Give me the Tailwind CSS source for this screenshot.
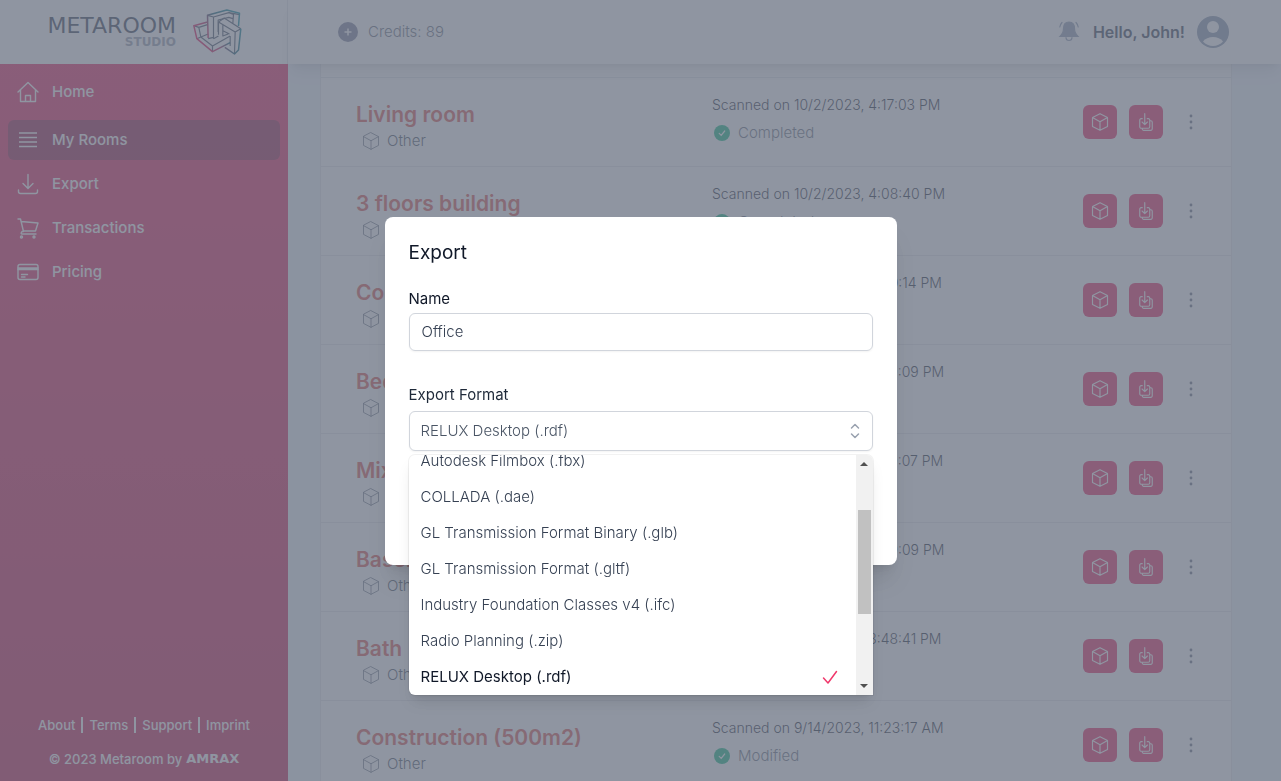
<!DOCTYPE html>
<html lang="en">

<head>
  <meta charset="UTF-8">
  <meta name="viewport" content="width=device-width, initial-scale=1.0">
  <title>Metaroom Studio - My Rooms</title>
  <script src="https://cdn.jsdelivr.net/npm/@tailwindcss/browser@4"></script>
</head>

<body class="h-screen overflow-hidden bg-[#f0f5fc] font-['Inter','Liberation_Sans',sans-serif] text-[15px] leading-5">

  <!-- Shared icons -->
  <svg class="hidden">
    <symbol id="cube" viewBox="0 0 24 24" fill="none" stroke="currentColor" stroke-linejoin="round" stroke-linecap="round">
      <path d="M12 2 21 6.700v10.600L12 22 3 17.300V6.700zM3 6.700l9 5 9-5M12 11.700V22" />
    </symbol>
    <symbol id="download" viewBox="0 0 24 24" fill="none" stroke="currentColor" stroke-linejoin="round" stroke-linecap="round">
      <path d="M10.500 2v13M7.300 12l3.200 3.200 3.200-3.200M7.500 8H6.200A1.700 1.700 0 0 0 4.500 9.700v8A1.800 1.800 0 0 0 6.300 19.500h8.400a1.800 1.800 0 0 0 1.800-1.800v-8A1.700 1.700 0 0 0 14.800 8h-1.300M16.500 10.500h1.300a1.700 1.700 0 0 1 1.700 1.700v8a1.800 1.800 0 0 1-1.800 1.800H9.300a1.800 1.800 0 0 1-1.800-1.800v-.700" />
    </symbol>
    <symbol id="done" viewBox="0 0 16 16">
      <circle cx="8" cy="8" r="8" fill="#10b981" />
      <path d="m5.200 8.300 2 2 3.500-4.300" fill="none" stroke="#fff" stroke-width="1.200" stroke-linecap="round" />
    </symbol>
    <symbol id="dots" viewBox="0 0 16 16" fill="currentColor">
      <circle cx="8" cy="2" r="1.400" /><circle cx="8" cy="8" r="1.400" /><circle cx="8" cy="14" r="1.400" />
    </symbol>
  </svg>

  <div class="flex h-full">
    <!-- Sidebar -->
    <aside class="flex w-72 shrink-0 flex-col bg-linear-to-b from-[#ec2461] to-[#c61d50] text-white">
      <div class="flex h-16 shrink-0 items-center justify-end gap-4 border-r border-gray-200 bg-white pr-11">
        <div class="flex flex-col items-end pb-px font-['DejaVu_Sans',sans-serif]">
          <span class="text-[22px] leading-5 text-gray-700">METAROOM</span>
          <span class="text-[12px] leading-3 font-bold text-gray-400">STUDIO</span>
        </div>
        <svg class="h-12 w-[51px]" viewBox="576 20 152 144" fill="none" stroke-linejoin="round">
          <defs>
            <linearGradient id="mark" gradientUnits="userSpaceOnUse" x1="590" y1="130" x2="715" y2="60">
              <stop offset="0" stop-color="#f0105a" /><stop offset="0.350" stop-color="#c02560" /><stop offset="0.600" stop-color="#155e75" /><stop offset="1" stop-color="#08889c" />
            </linearGradient>
          </defs>
          <g stroke="#475569" stroke-width="3.500">
            <path d="M622 42 640 47 686 34 718 40M640 47V112M624 112 640 108M686 34 700 39 698 66M654 92V56L686 48 698 52" />
            <path d="M581 73 596 78 622 70M596 78 602 107 637 134 690 104M602 107 624 98M590 112 602 107M637 134V151M640 112 655 104M690 104V134" />
            <path d="M655 62 672 50 722 82M655 62 705 92 703 158M705 92 722 82M655 62V100M668 72V104L684 98M668 88 688 98" />
          </g>
          <g stroke="url(#mark)" stroke-width="4.500">
            <path d="M624 110 622 42 680 26 718 36 715 74M622 62 581 73 590 112 637 151 690 124M722 82 715 146 703 158 674 138" />
          </g>
        </svg>
      </div>

      <nav class="flex flex-col gap-1 p-2 font-medium">
        <a href="#" class="mb-1 flex h-10 items-center gap-3 rounded-md px-2">
          <svg class="size-6" viewBox="0 0 24 24" fill="none" stroke="currentColor" stroke-width="1.400" stroke-linecap="round" stroke-linejoin="round"><path d="M2 12 12 2.500 22 12M4.500 10v11.500h15V10M9.500 21.500v-6h5v6" /></svg>
          Home
        </a>
        <a href="#" class="flex h-10 items-center gap-3 rounded-md bg-gray-900/35 px-2">
          <svg class="size-6" viewBox="0 0 24 24" fill="none" stroke="currentColor" stroke-width="1.400"><path d="M3 5h18M3 9.500h18M3 14h18M3 18.500h18" /></svg>
          My Rooms
        </a>
        <a href="#" class="flex h-10 items-center gap-3 rounded-md px-2">
          <svg class="size-6" viewBox="0 0 24 24" fill="none" stroke="currentColor" stroke-width="1.400" stroke-linecap="round" stroke-linejoin="round"><path d="M12 2.500v13.500M7 11.500l5 5 5-5M2.500 18v1.500a2 2 0 0 0 2 2h15a2 2 0 0 0 2-2V18" /></svg>
          Export
        </a>
        <a href="#" class="flex h-10 items-center gap-3 rounded-md px-2">
          <svg class="size-6" viewBox="0 0 24 24" fill="none" stroke="currentColor" stroke-width="1.400" stroke-linecap="round" stroke-linejoin="round"><path d="M2 3h2.500L7.500 15.500M5.200 5.500 22 7l-2.500 8h-12C5 15.500 4.500 18 6 18h14" /><circle cx="5.500" cy="21" r="1" /><circle cx="18" cy="21" r="1" /></svg>
          Transactions
        </a>
        <a href="#" class="flex h-10 items-center gap-3 rounded-md px-2">
          <svg class="size-6" viewBox="0 0 24 24" fill="none" stroke="currentColor" stroke-width="1.400" stroke-linecap="round"><rect x="2" y="4.500" width="20" height="15" rx="2" /><path d="M2 8h20M2 9.500h20M5.500 14.500h6M5.500 17h3.500" /></svg>
          Pricing
        </a>
      </nav>

      <footer class="mt-auto flex flex-col items-center gap-4 pb-3 text-[13px] font-medium">
        <div class="flex items-center divide-x-2 divide-white leading-4">
          <a href="#" class="px-1.5">About</a>
          <a href="#" class="px-1.5">Terms</a>
          <a href="#" class="px-1.5">Support</a>
          <a href="#" class="px-1.5">Imprint</a>
        </div>
        <p class="flex items-center gap-1">© 2023 Metaroom by <span class="font-['DejaVu_Sans',sans-serif] font-bold">AMRAX</span></p>
      </footer>
    </aside>

    <div class="flex min-w-0 flex-1 flex-col">
      <!-- Top bar -->
      <header class="relative z-10 flex h-16 shrink-0 items-center justify-between bg-white pr-[52px] pl-[50px] shadow-lg">
        <div class="flex items-center gap-2.5 font-light text-gray-500">
          <button aria-label="Add credits">
            <svg class="size-5" viewBox="0 0 20 20"><circle cx="10" cy="10" r="10" fill="#7b809a" /><path d="M10 6.500v7M6.500 10h7" stroke="#fff" stroke-width="1.500" /></svg>
          </button>
          Credits: 89
        </div>
        <div class="flex items-center gap-3 text-[16px] font-semibold text-gray-700">
          <button aria-label="Notifications">
            <svg class="size-6" viewBox="0 0 24 24" fill="none" stroke="#8f9cb3" stroke-width="1.200" stroke-linecap="round"><path d="M12 2C8 2 6.500 5 6.500 8.500c0 3.500-1 5.500-3.500 8h18c-2.500-2.500-3.500-4.500-3.500-8C17.500 5 16 2 12 2z" fill="#8f9cb3" /><path d="M9 17.500a3 3 0 0 0 6 0M5 2.500C3.500 4 3 5.500 2.800 7M19 2.500c1.500 1.500 2 3 2.200 4.500" /></svg>
          </button>
          Hello, John!
          <button aria-label="Account">
            <svg class="size-8" viewBox="0 0 32 32"><circle cx="16" cy="16" r="16" fill="#8796ae" /><circle cx="16" cy="11" r="6" fill="#fff" /><path d="M6 25.500c2-3 6-4.500 10-4.500s8 1.500 10 4.500A13.500 13.500 0 0 1 16 30 13.500 13.500 0 0 1 6 25.500z" fill="#fff" /></svg>
          </button>
        </div>
      </header>

      <!-- Room list, scrolled down a little -->
      <main class="min-h-0 flex-1 overflow-hidden pr-[49px] pl-8">
        <ul id="room-list" class="divide-y divide-gray-200 border-x border-gray-200 bg-white">
          <li class="h-3.5"></li>
        </ul>
      </main>
    </div>
  </div>

  <!-- Backdrop and export dialog -->
  <div class="fixed inset-0 z-20 flex items-center justify-center bg-gray-500/75">
    <form role="dialog" aria-labelledby="dialog-title" class="w-full max-w-lg rounded-lg bg-white px-6 pt-6 pb-[114px] shadow-xl">
      <h2 id="dialog-title" class="text-[19px] leading-6 text-gray-900">Export</h2>

      <label for="name" class="mt-6 block text-gray-900">Name</label>
      <input type="text" id="name" value="Office" class="mt-1 block h-[38px] w-full rounded-md border border-gray-300 px-3 font-light text-gray-700 shadow-xs" />

      <label for="format" class="mt-[34px] block text-gray-800">Export Format</label>
      <div class="relative mt-1.5">
        <select id="format" class="block h-10 w-full appearance-none rounded-md border border-gray-300 bg-white px-[11px] font-light text-gray-600 shadow-xs">
          <option>RELUX Desktop (.rdf)</option>
        </select>
        <svg class="pointer-events-none absolute top-2.5 right-2 size-5 text-gray-400" viewBox="0 0 20 20" fill="none" stroke="currentColor" stroke-width="1.500" stroke-linecap="round" stroke-linejoin="round"><path d="m6.500 7 3.500-3.500L13.500 7M6.500 13l3.500 3.500 3.500-3.500" /></svg>

        <!-- Open menu -->
        <div class="absolute inset-x-0 top-11 flex h-60 overflow-hidden rounded-md rounded-br-none bg-white shadow-lg ring-1 ring-black/5">
          <ul role="listbox" aria-label="Export Format" class="-mt-3 flex-1 font-light text-gray-700 *:h-9 *:px-3 *:py-2">
            <li role="option">Autodesk Filmbox (.fbx)</li>
            <li role="option">COLLADA (.dae)</li>
            <li role="option">GL Transmission Format Binary (.glb)</li>
            <li role="option">GL Transmission Format (.gltf)</li>
            <li role="option">Industry Foundation Classes v4 (.ifc)</li>
            <li role="option">Radio Planning (.zip)</li>
            <li role="option" aria-selected="true" class="flex items-center justify-between font-normal text-gray-900">
              RELUX Desktop (.rdf)
              <svg class="mr-1 size-5" viewBox="0 0 20 20" fill="none" stroke="#f0386b" stroke-width="1.500" stroke-linecap="round" stroke-linejoin="round"><path d="m3.500 11 4.500 5 8.500-11.500" /></svg>
            </li>
          </ul>
          <div class="flex w-[17px] flex-col items-center justify-between bg-[#f1f1f1] text-[#505050]">
            <svg class="h-[17px] w-2" viewBox="0 0 8 17" fill="currentColor"><path d="M0 11 4 7l4 4z" /></svg>
            <div class="mt-[38px] mb-auto h-[104px] w-[13px] bg-[#c1c1c1]"></div>
            <svg class="h-[17px] w-2" viewBox="0 0 8 17" fill="currentColor"><path d="M0 6 4 10l4-4z" /></svg>
          </div>
        </div>
      </div>
    </form>
  </div>

  <script>
    const rooms = [
      { name: 'Living room', date: '10/2/2023, 4:17:03 PM', status: 'Completed' },
      { name: '3 floors building', date: '10/2/2023, 4:08:40 PM', status: 'Completed' },
      { name: 'Corridor', date: '10/2/2023, 4:00:14 PM', status: 'Completed' },
      { name: 'Bedroom', date: '10/2/2023, 3:50:09 PM', status: 'Completed' },
      { name: 'Mixed room', date: '10/2/2023, 3:50:07 PM', status: 'Completed' },
      { name: 'Basement', date: '10/2/2023, 3:49:09 PM', status: 'Completed' },
      { name: 'Bath', date: '9/14/2023, 3:48:41 PM', status: 'Completed' },
      { name: 'Construction (500m2)', date: '9/14/2023, 11:23:17 AM', status: 'Modified' },
    ];
    const roomList = document.getElementById('room-list');

    rooms.forEach((room) => {
      const item = document.createElement('li');
      item.className = 'flex h-[89px] items-start pt-px pr-8 pl-[35px]';
      item.innerHTML = `
        <div class="w-[356px] pt-6">
          <h3 class="text-[21px] leading-6 font-semibold text-[#d9564f]">${room.name}</h3>
          <p class="flex items-center gap-1.5 pt-1 pl-[5px] font-light text-gray-600">
            <svg class="size-5 text-gray-500"><use href="#cube" /></svg>Other
          </p>
        </div>
        <div class="font-light">
          <p class="pt-4 text-[14px] text-gray-800">Scanned on ${room.date}</p>
          <p class="flex items-center gap-2 pt-2 pl-0.5 text-gray-500">
            <svg class="size-4"><use href="#done" /></svg>${room.status}
          </p>
        </div>
        <div class="ml-auto flex items-center pt-[26px]">
          <button aria-label="View room" class="mr-3 flex size-[34px] items-center justify-center rounded-md bg-[#ec2461] text-white">
            <svg class="size-5"><use href="#cube" stroke-width="1.4" /></svg>
          </button>
          <button aria-label="Export room" class="mr-5 flex size-[34px] items-center justify-center rounded-md bg-[#ec2461] text-white">
            <svg class="size-5"><use href="#download" stroke-width="1.4" /></svg>
          </button>
          <button aria-label="More" class="text-gray-500"><svg class="size-4"><use href="#dots" /></svg></button>
        </div>
      `;
      roomList.appendChild(item);
    });
  </script>
</body>

</html>
